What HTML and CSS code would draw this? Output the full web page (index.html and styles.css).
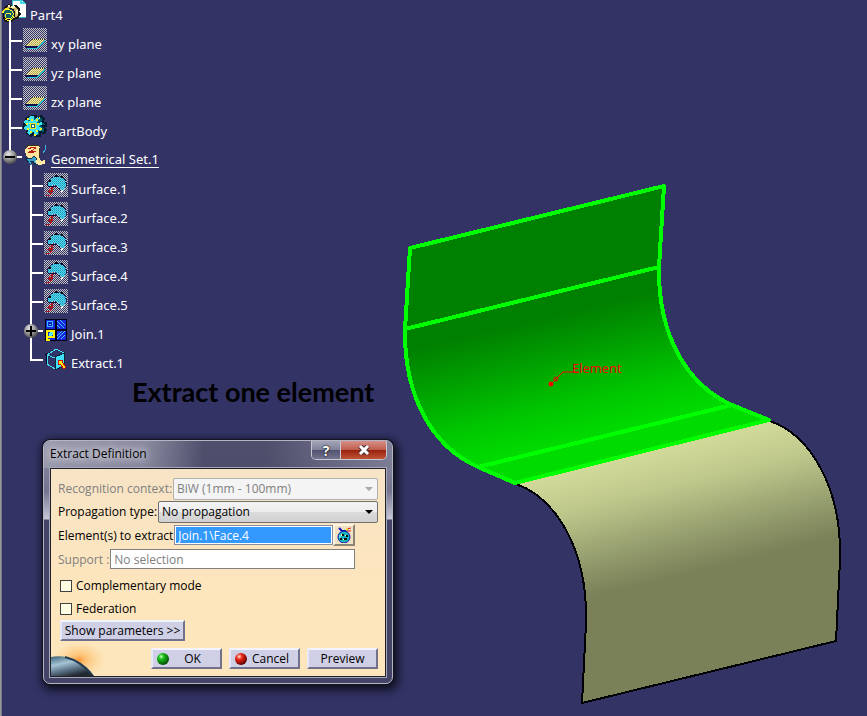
FILE: index.html
```html
<!DOCTYPE html>
<html lang="en">
<head>
  <meta charset="UTF-8">
  <meta name="viewport" content="width=device-width, initial-scale=1.0">
  <title>Part4 - Extract</title>
  <link rel="stylesheet" href="styles.css">
</head>
<body>

<!-- Shared icons -->
<svg class="icon-defs" aria-hidden="true">
  <defs>
    <pattern id="dither" width="2" height="2" patternUnits="userSpaceOnUse">
      <rect width="1" height="1" fill="#c4c4c4"/>
      <rect x="1" y="1" width="1" height="1" fill="#c4c4c4"/>
    </pattern>
    <pattern id="dither-yellow" width="2" height="2" patternUnits="userSpaceOnUse">
      <rect width="2" height="2" fill="#fff39a"/>
      <rect width="1" height="1" fill="#a09458"/>
      <rect x="1" y="1" width="1" height="1" fill="#b8a868"/>
    </pattern>
    <pattern id="dither-cyan" width="2" height="2" patternUnits="userSpaceOnUse">
      <rect width="2" height="2" fill="#3ee4ff"/>
      <rect width="1" height="1" fill="#2f86a8"/>
      <rect x="1" y="1" width="1" height="1" fill="#49a8c0"/>
    </pattern>
    <radialGradient id="ball" cx="0.4" cy="0.3" r="0.7">
      <stop offset="0" stop-color="#e8e8e8"/>
      <stop offset="0.5" stop-color="#9c9c9c"/>
      <stop offset="1" stop-color="#4c4c4c"/>
    </radialGradient>
    <radialGradient id="ball-green" cx="0.35" cy="0.3" r="0.7">
      <stop offset="0" stop-color="#d0ffc8"/>
      <stop offset="0.3" stop-color="#1cc41c"/>
      <stop offset="1" stop-color="#045004"/>
    </radialGradient>
    <radialGradient id="ball-red" cx="0.35" cy="0.3" r="0.7">
      <stop offset="0" stop-color="#ffe0d8"/>
      <stop offset="0.35" stop-color="#f02818"/>
      <stop offset="1" stop-color="#600000"/>
    </radialGradient>

    <symbol id="icon-plane" viewBox="0 0 24 24">
      <rect width="24" height="24" fill="url(#dither)"/>
      <path d="M9 11h14l-8 7H2z" fill="url(#dither-yellow)"/>
      <path d="M9 11.500h13" stroke="#3a3a20" stroke-dasharray="1 1"/>
      <path d="M2 18h13v2H3z" fill="#10104c"/>
      <path d="M4 20.500h10l8-8" fill="none" stroke="#2cc8d8"/>
    </symbol>

    <symbol id="icon-surface" viewBox="0 0 24 24">
      <rect width="24" height="24" fill="url(#dither)"/>
      <path d="M3 13C4 6 9 3 13 3c6 0 10 4 9 10l-2 4-2 1c-2-4-5-6-9-6l-5 2z" fill="url(#dither-cyan)"/>
      <path d="M3 13C4 6 9 3 13 3c6 0 10 4 9 10" fill="none" stroke="#10103c" stroke-dasharray="2 1"/>
      <path d="M5 8h2M11 3h2M17 4h2" stroke="#000" stroke-width="2"/>
      <path d="M4 14l5-1c4 0 6 2 8 5" fill="none" stroke="#10103c"/>
      <path d="M17 19l2-1" stroke="#fff" stroke-width="2"/>
      <path d="M9 14l-4 3 4 1-6 1M8 15l1 3-3 4H2M5 16v4" fill="none" stroke="#b01414"/>
    </symbol>

    <symbol id="icon-body" viewBox="0 0 24 24">
      <path d="M9 1h4l1 3 4-3 3 3-2 3 4 1v3h-3l3 4-2 3-4-1v4h-4l-2-3-3 3-4-3 1-4-4-1V9l4-1-2-4 3-2 3 2z" fill="#005c6c" stroke="#001c2c" stroke-width="2"/>
      <path d="M8 1h3v4l3-3 2 2-2 4 5-1v3l-4 1 4 2-1 3-4-1 1 4-3 2-2-5-3 4-3-2 2-4-4 1-1-3 4-2-4-2 1-3 5 1-2-3 2-2 3 3z" fill="#3ce0f4"/>
      <path d="M5 3v2M9 4v2M3 9h2M7 8v1M13 5h2M14 9h2M4 14h2M7 17h2M13 16h2M11 20h2M17 14h2M16 3h1" stroke="#f8f020" stroke-width="2"/>
      <circle cx="10" cy="11" r="3" fill="#10687c" stroke="#f0e820"/>
      <path d="M9 11h2" stroke="#fff" stroke-width="2"/>
    </symbol>

    <symbol id="icon-set" viewBox="0 0 24 24">
      <path d="M3 4l4-3h9l1 4-1 8 2 4 4-1-1 4-5 1-5-2-3-4-4-2-2-6z" fill="#ffe49c"/>
      <path d="M2 4l4-3h10M17 4l-1 9" fill="none" stroke="#403014"/>
      <path d="M5 5l5-2 3 1-5 3h5M5 9l6-1" fill="none" stroke="#b41c14"/>
      <path d="M2 14h7l2-2 2 2 1 3-2 4-2-4-4 1-4-3z" fill="#38a4cc" stroke="#10304c"/>
      <path d="M22 1l1 4-3 4M5 16l4 5" fill="none" stroke="#38b4dc"/>
      <path d="M13 17l3 3 6-1" fill="none" stroke="#fff0b0" stroke-width="2"/>
    </symbol>

    <symbol id="icon-join" viewBox="0 0 24 24">
      <path d="M1 1h10v10H1zM12 1h10v10H12zM1 12h10v10H1zM12 12h10v10H12z" fill="#1428dc" stroke="#000014"/>
      <circle cx="6" cy="6" r="3" fill="#1020c0" stroke="#40b8f8"/>
      <path d="M5 6h2" stroke="#40b8f8"/>
      <path d="M13 3l7 7M16 2l5 5M13 7l3 3M13 18l5-5M13 21l8-8M17 21l4-4" stroke="#48c4ff"/>
      <path d="M2 13h8v6H4M3 13v9h3" fill="none" stroke="#fff200" stroke-width="2"/>
      <circle cx="7" cy="16" r="2" fill="#58ecff"/>
    </symbol>

    <symbol id="icon-extract" viewBox="0 0 24 24">
      <path d="M2 8l10-6 8 4-9 5z" fill="#303468" stroke="#000018"/>
      <path d="M2 8l9 3v11l-8-5z" fill="#303468" stroke="#000018"/>
      <path d="M11 10l9-4v13l-9 4z" fill="#40e0f8" stroke="#082838"/>
      <path d="M3 8l9-6 8 4M3 9v8l8 5M3 8l8 3" fill="none" stroke="#40e0f8"/>
      <path d="M14 13h5l-1 2 4 5-2 2-4-5-2 1z" fill="#ffe818" stroke="#d01408"/>
    </symbol>

    <symbol id="icon-part" viewBox="0 0 24 22">
      <path d="M10 0h10l4 4v13H14l-4-5z" fill="#fff" stroke="#30b8cc"/>
      <path d="M18 0v4h6z" fill="#40dcec"/>
      <path d="M3 8l4-3 3 2 4-1 3 3-1 3 2 2-3 4-4 1-2 2H4l-2-3z" fill="#d0b868" stroke="#181410" stroke-width="2"/>
      <path d="M9 7h4M7 5v2M15 10v4" stroke="#fff4b0" stroke-width="2"/>
      <circle cx="7" cy="14" r="6" fill="#0c5c70" stroke="#101018"/>
      <path d="M2 11c4-4 10 0 9 4-1 5-8 5-8 1 0-3 5-4 6-1M3 19c2 2 8 2 9-3" fill="none" stroke="#fff020"/>
      <path d="M1 13c0-3 3-5 6-4" fill="none" stroke="#fff020" stroke-width="2"/>
    </symbol>

    <symbol id="icon-bag" viewBox="0 0 16 16">
      <path d="M3 1l3 3h4l2-2" fill="none" stroke="#1010c0" stroke-width="2"/>
      <path d="M11 2l4-1M11 4h4" stroke="#e02010"/>
      <path d="M10 3l2-1" stroke="#fff020" stroke-width="2"/>
      <circle cx="8" cy="10" r="6" fill="#18b4bc" stroke="#1010a8"/>
      <path d="M6 7h2v2H6zM10 8h2v2h-2zM4 11h2v2H4zM8 11h3v2H8z" fill="#101010"/>
      <path d="M5 7h1v2H5zM9 8h1v1H9zM7 12h1v1H7z" fill="#fffbd0"/>
      <path d="M4 8v3" stroke="#a8fff8"/>
    </symbol>
  </defs>
</svg>

<main class="viewport">

  <!-- 3D model -->
  <svg class="model" viewBox="0 0 867 716" preserveAspectRatio="xMinYMin meet" role="img" aria-label="Surface model">
    <defs>
      <linearGradient id="green-face" gradientUnits="userSpaceOnUse" x1="410" y1="350" x2="440" y2="475">
        <stop offset="0" stop-color="#008000"/>
        <stop offset="0.35" stop-color="#00a200"/>
        <stop offset="0.7" stop-color="#00c600"/>
        <stop offset="1" stop-color="#00dc00"/>
      </linearGradient>
      <linearGradient id="beige-face" gradientUnits="userSpaceOnUse" x1="516" y1="484" x2="546" y2="608">
        <stop offset="0" stop-color="#d2da9a"/>
        <stop offset="0.3" stop-color="#bfc88b"/>
        <stop offset="0.7" stop-color="#959e6e"/>
        <stop offset="1" stop-color="#7a8058"/>
      </linearGradient>
    </defs>
    <path fill="url(#beige-face)" d="M516 484C556 498 588 550 586 623L582 703 836 641 840 560C842 487 810 435 770 421z"/>
    <path class="edge-black" d="M516 484C556 498 588 550 586 623L582 703 836 641 840 560C842 487 810 435 770 421"/>
    <g class="edge-green">
      <path fill="#008000" d="M410 248 664 186 659 267 405 329z"/>
      <path fill="url(#green-face)" d="M405 329C404 395 431 446 478 467L732 405C685 384 658 333 659 267z"/>
      <path fill="#00dc00" d="M478 467 515 483 769 420 732 405z"/>
    </g>
    <g class="leader">
      <circle class="leader-dot" cx="551" cy="384" r="2"/>
      <circle cx="556" cy="379" r="2"/>
      <path d="M552 383 563 372H579"/>
    </g>
    <text class="leader-text" x="572" y="373">Element</text>
  </svg>

  <!-- Specification tree -->
  <nav class="tree" aria-label="Specification tree">
    <div class="row root">
      <svg class="icon" viewBox="0 0 24 22"><use href="#icon-part"/></svg>
      <span class="label">Part4</span>
    </div>
    <ul class="branch">
      <li><div class="row"><svg class="icon"><use href="#icon-plane"/></svg><span class="label">xy plane</span></div></li>
      <li><div class="row"><svg class="icon"><use href="#icon-plane"/></svg><span class="label">yz plane</span></div></li>
      <li><div class="row"><svg class="icon"><use href="#icon-plane"/></svg><span class="label">zx plane</span></div></li>
      <li><div class="row"><svg class="icon"><use href="#icon-body"/></svg><span class="label">PartBody</span></div></li>
      <li>
        <button class="toggle" aria-label="Collapse Geometrical Set.1">
          <svg viewBox="0 0 14 14"><circle cx="7" cy="7" r="7" fill="url(#ball)"/><path d="M2 7h10" stroke="#000" stroke-width="2"/></svg>
        </button>
        <div class="row"><svg class="icon"><use href="#icon-set"/></svg><span class="label active">Geometrical Set.1</span></div>
        <ul class="branch sub">
          <li><div class="row"><svg class="icon"><use href="#icon-surface"/></svg><span class="label">Surface.1</span></div></li>
          <li><div class="row"><svg class="icon"><use href="#icon-surface"/></svg><span class="label">Surface.2</span></div></li>
          <li><div class="row"><svg class="icon"><use href="#icon-surface"/></svg><span class="label">Surface.3</span></div></li>
          <li><div class="row"><svg class="icon"><use href="#icon-surface"/></svg><span class="label">Surface.4</span></div></li>
          <li><div class="row"><svg class="icon"><use href="#icon-surface"/></svg><span class="label">Surface.5</span></div></li>
          <li>
            <button class="toggle" aria-label="Expand Join.1">
              <svg viewBox="0 0 14 14"><circle cx="7" cy="7" r="7" fill="url(#ball)"/><path d="M2 7h10M7 2v10" stroke="#000" stroke-width="2"/></svg>
            </button>
            <div class="row"><svg class="icon"><use href="#icon-join"/></svg><span class="label">Join.1</span></div>
          </li>
          <li><div class="row"><svg class="icon"><use href="#icon-extract"/></svg><span class="label">Extract.1</span></div></li>
        </ul>
      </li>
    </ul>
  </nav>

  <h1 class="caption">Extract one element</h1>

  <!-- Extract dialog -->
  <section class="dialog" role="dialog" aria-labelledby="dialog-title">
    <header class="title-bar">
      <h2 id="dialog-title">Extract Definition</h2>
      <div class="window-buttons">
        <button class="help" aria-label="Help">?</button>
        <button class="close" aria-label="Close">
          <svg viewBox="0 0 12 10"><path d="M2 1l8 8M10 1L2 9" stroke="#4c3038" stroke-width="5"/><path d="M2 1l8 8M10 1L2 9" stroke="#fff" stroke-width="3"/></svg>
        </button>
      </div>
    </header>
    <form class="client">
      <svg class="planet" viewBox="0 0 56 36" aria-hidden="true">
        <defs>
          <radialGradient id="glow">
            <stop offset="0" stop-color="#ff9838"/>
            <stop offset="0.25" stop-color="#fdb860" stop-opacity="0.8"/>
            <stop offset="1" stop-color="#fdd080" stop-opacity="0"/>
          </radialGradient>
          <linearGradient id="globe" x1="0" y1="0" x2="0.5" y2="1">
            <stop offset="0" stop-color="#3c6078"/>
            <stop offset="0.4" stop-color="#a4c4d4"/>
            <stop offset="0.7" stop-color="#5c7488"/>
            <stop offset="1" stop-color="#202830"/>
          </linearGradient>
        </defs>
        <ellipse cx="28" cy="20" rx="26" ry="18" fill="url(#glow)"/>
        <path d="M0 17C14 14 32 20 43 36H0z" fill="url(#globe)"/>
        <path d="M14 17c12 3 20 9 27 18" fill="none" stroke="#243c50" stroke-width="2"/>
      </svg>

      <div class="field disabled">
        <label class="wide" for="context">Recognition context:</label>
        <span class="select-box">
          <select id="context" disabled><option>BiW (1mm - 100mm)</option></select>
        </span>
      </div>
      <div class="field">
        <label class="medium" for="propagation">Propagation type:</label>
        <span class="select-box">
          <select id="propagation"><option>No propagation</option></select>
        </span>
      </div>
      <div class="field short">
        <label class="wide" for="elements">Element(s) to extract</label>
        <input class="selected" type="text" id="elements" value="Join.1\Face.4">
        <button class="bag" type="button" aria-label="Multiple elements"><svg viewBox="0 0 16 16"><use href="#icon-bag"/></svg></button>
      </div>
      <div class="field short disabled">
        <label class="narrow" for="support">Support :</label>
        <input type="text" id="support" value="No selection">
      </div>
      <div class="checks">
        <label><input type="checkbox"> Complementary mode</label>
        <label><input type="checkbox"> Federation</label>
      </div>
      <button class="btn show" type="button">Show parameters &gt;&gt;</button>
      <div class="actions">
        <button class="btn" type="button">
          <svg viewBox="0 0 12 12"><circle cx="6" cy="6" r="6" fill="url(#ball-green)"/></svg><span>OK</span>
        </button>
        <button class="btn" type="button">
          <svg viewBox="0 0 12 12"><circle cx="6" cy="6" r="6" fill="url(#ball-red)"/></svg><span>Cancel</span>
        </button>
        <button class="btn" type="button"><span>Preview</span></button>
      </div>
    </form>
  </section>

</main>

</body>
</html>
```
FILE: styles.css
```css
* {
  box-sizing: border-box;
}

body {
  margin: 0;
  font-family: "Open Sans", "Noto Sans", sans-serif;
  font-size: 12px;
  background: #333366;
}

button, input, select {
  font: inherit;
  color: inherit;
  margin: 0;
}

.icon-defs {
  position: absolute;
  width: 0;
  height: 0;
}

.viewport {
  position: relative;
  min-height: 100vh;
  overflow: hidden;
  background: linear-gradient(to right, #999999 1px, #77778a 1px, #77778a 2px, #333366 2px);
}

/* Model */
.model {
  position: absolute;
  top: 0;
  left: 0;
  width: 100%;
}

.edge-black {
  fill: none;
  stroke: #000;
  stroke-width: 2;
  shape-rendering: crispEdges;
}

.edge-green {
  stroke: #00ff00;
  stroke-width: 4;
  stroke-linejoin: round;
  shape-rendering: crispEdges;
}

.leader {
  fill: none;
  stroke: #ff0000;
}

.leader .leader-dot {
  fill: #ff0000;
}

.leader-text {
  font-size: 13px;
  fill: #ff0000;
}

/* Tree */
.tree {
  position: relative;
  color: #fff;
  font-family: "Noto Sans", sans-serif;
  font-size: 13px;
}

.row {
  display: flex;
  gap: 4px;
  height: 29px;
}

.sub .row {
  gap: 3px;
}

.root {
  height: 28px;
  padding-left: 2px;
}

.icon {
  width: 24px;
  height: 24px;
  shape-rendering: crispEdges;
}

.root .icon {
  height: 22px;
}

.label {
  line-height: 24px;
  padding-top: 4px;
}

.root .label {
  padding-top: 3px;
}

.label.active {
  padding-top: 3px;
  text-decoration: underline;
  text-underline-offset: 3px;
}

.branch {
  list-style: none;
  margin: 0;
  padding: 0 0 0 23px;
}

.branch.sub {
  padding-left: 21px;
}

.branch li {
  position: relative;
}

/* Connector lines */
.branch li::before,
.branch li::after {
  content: "";
  position: absolute;
  left: -14px;
  background: #fff;
}

.branch li::before {
  top: 12px;
  width: 13px;
  height: 2px;
}

.branch li::after {
  top: -8px;
  bottom: 0;
  width: 2px;
}

.branch li:last-child::after {
  bottom: auto;
  height: 22px;
}

.toggle {
  position: absolute;
  z-index: 1;
  top: 6px;
  left: -20px;
  width: 14px;
  height: 14px;
  padding: 0;
  border: none;
  background: none;
}

.toggle svg {
  display: block;
}

.caption {
  position: relative;
  margin: 0 0 32px 132px;
  font-family: Lato, sans-serif;
  font-size: 27px;
  font-weight: bold;
  line-height: 32px;
  color: #000;
}

/* Dialog */
.dialog {
  position: relative;
  width: 350px;
  max-width: 100%;
  margin-left: 43px;
  padding: 0 6px 6px;
  border: 1px solid #b4b4c4;
  border-radius: 7px;
  background: linear-gradient(#8c8ca4, #747490 50px, #c8c8d8 78px, #444466 79px, #444466);
  box-shadow: 0 0 0 1px #14141f, 2px 3px 10px 3px rgba(0, 0, 0, 0.75);
}

.title-bar {
  display: flex;
  justify-content: space-between;
  align-items: flex-start;
  height: 27px;
  margin: 0 -6px;
  padding: 0 5px 0 6px;
  border-radius: 6px 6px 0 0;
  background: linear-gradient(to right, rgba(160, 160, 178, 0.8), rgba(140, 140, 160, 0.6) 100px, rgba(72, 72, 102, 0.9) 160px, rgba(72, 72, 102, 0.9) 220px, rgba(120, 120, 144, 0.5));
}

.title-bar h2 {
  margin: 0;
  font-size: 12px;
  font-weight: normal;
  line-height: 26px;
  color: #000;
  text-shadow: 0 0 8px #fff, 0 0 8px #d8d8e0;
}

.window-buttons {
  display: flex;
  border: 1px solid #c8c8d4;
  border-top: none;
  border-radius: 0 0 5px 5px;
  overflow: hidden;
}

.window-buttons button {
  display: flex;
  justify-content: center;
  align-items: center;
  height: 18px;
  padding: 0;
  border: none;
}

.window-buttons .help {
  width: 28px;
  color: #fff;
  font-size: 14px;
  font-weight: bold;
  text-shadow: 0 0 2px #000, 0 0 1px #000;
  background: linear-gradient(#a4a4b8, #80809a 50%, #505070 50%, #74748e);
}

.window-buttons .close {
  width: 46px;
  border-left: 1px solid #c8c8d4;
  background: linear-gradient(#d49088, #c05c4c 50%, #98200c 50%, #c05438);
}

.close svg {
  width: 12px;
  height: 10px;
}

.client {
  position: relative;
  padding: 8px 7px 7px;
  border: 1px solid #20202c;
  outline: 1px solid #a8a8b8;
  background: linear-gradient(#f7e4c6, #fde5bc 60%, #fde5bc);
  color: #000;
}

.planet {
  position: absolute;
  left: 0;
  bottom: 0;
  width: 56px;
  height: 36px;
}

.field {
  display: flex;
  align-items: center;
  height: 23px;
}

.field.disabled {
  color: #808080;
}

.field label {
  flex-shrink: 0;
  padding-right: 1px;
  white-space: nowrap;
}

.field .wide {
  min-width: 111px;
}

.field .medium {
  min-width: 94px;
}

.field .narrow {
  min-width: 50px;
}

.field.short {
  height: 24px;
  padding-right: 23px;
}

.select-box {
  position: relative;
  flex: 1;
}

.select-box::after {
  content: "";
  position: absolute;
  top: 9px;
  right: 5px;
  border: 4px solid transparent;
  border-top-color: #000;
  border-bottom: none;
}

.disabled .select-box::after {
  border-top-color: #a8a8a8;
}

select {
  appearance: none;
  display: block;
  width: 100%;
  height: 22px;
  padding: 0 3px;
  border: 1px solid #707070;
  border-radius: 2px;
  background: linear-gradient(#f4f4f4, #ececec 50%, #dcdcdc 50%, #d0d0d0);
}

select:disabled {
  border-color: #b0b0b0;
  background: #f4f4f4;
  color: #808080;
  opacity: 1;
}

.field input {
  flex: 1;
  min-width: 0;
  height: 20px;
  padding: 0 3px;
  border: 1px solid #808080;
  border-radius: 0;
  background: #fff;
}

.field .selected {
  border-color: #8c8ca0;
  background: #3399ff;
  color: #fff;
  box-shadow: inset 0 0 0 1px #fff;
}

.bag {
  display: flex;
  justify-content: center;
  align-items: center;
  width: 22px;
  height: 22px;
  padding: 0;
  border: 2px solid;
  border-color: #fff4e0 #8c8474 #8c8474 #fff4e0;
  background: #f0e0c4;
}

.bag svg {
  flex-shrink: 0;
  width: 16px;
  height: 16px;
}

.checks {
  display: grid;
  margin: 3px 0 0 2px;
}

.checks label {
  display: flex;
  align-items: center;
  gap: 4px;
  height: 23px;
}

.checks input {
  appearance: none;
  width: 12px;
  height: 12px;
  border: 1px solid #404040;
  background: #ffffe4;
}

.btn {
  display: flex;
  align-items: center;
  height: 21px;
  padding: 0 4px;
  border: 2px solid;
  border-color: #f4f4ff #71718c #71718c #e8e8fc;
  background: #cfcfe6;
}

.btn svg {
  width: 12px;
  height: 12px;
}

.btn span {
  flex: 1;
  text-align: center;
}

.show {
  width: 125px;
  margin-left: 2px;
  justify-content: center;
  white-space: nowrap;
}

.actions {
  position: relative;
  display: flex;
  justify-content: flex-end;
  gap: 7px;
  margin-top: 7px;
}

.actions .btn {
  width: 71px;
}
```
